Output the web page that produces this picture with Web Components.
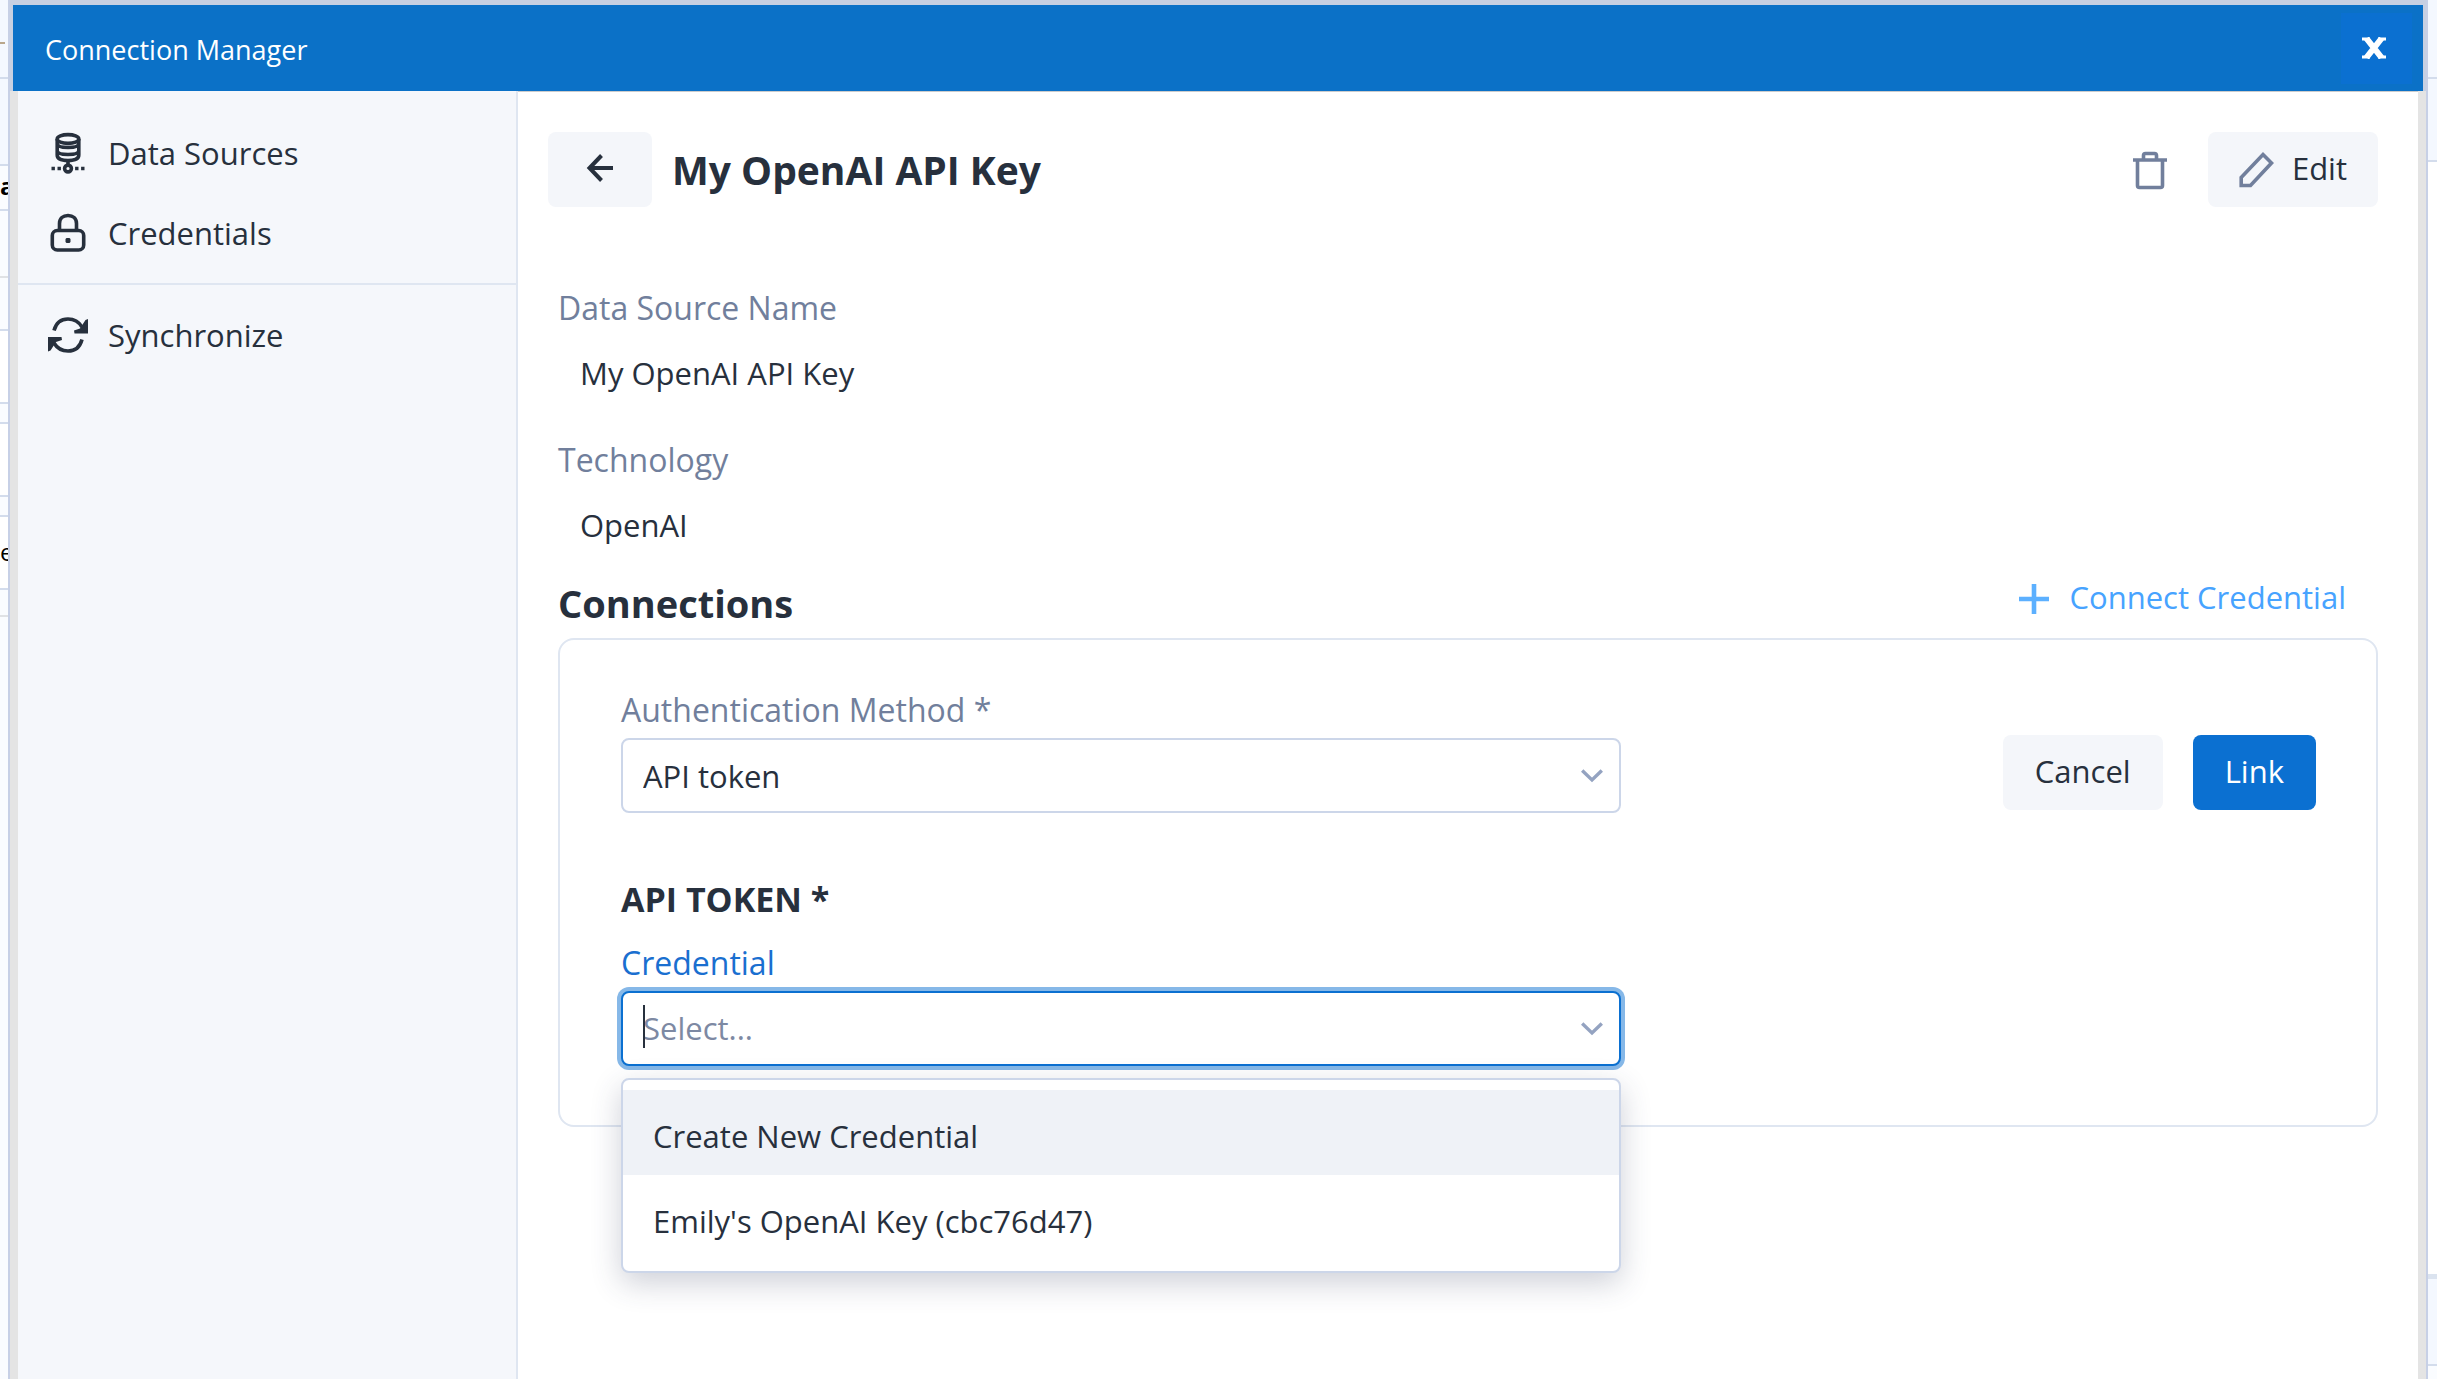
<!DOCTYPE html>
<html lang="en">
<head>
<meta charset="utf-8">
<title>Connection Manager</title>
<style>
  html, body { height: 100%; margin: 0; }
  body {
    --ink: #27303d;
    --muted: #717f9c;
    --line: #dfe6f1;
    --control: #ccd6e9;
    --soft: #f4f6fa;
    --primary: #0b70d1;
    --text: 31px;
    --label: 32px;
    --row: 75px;
    font-family: "Open Sans", "Noto Sans", sans-serif;
    font-size: var(--text);
    line-height: 40px;
    color: var(--ink);
    overflow: hidden;
  }
  cm-desktop { height: 100%; }
</style>
</head>
<body>
<cm-desktop>
  <cm-window heading="Connection Manager">
    <cm-sidebar slot="sidebar">
      <cm-nav-item icon="database">Data Sources</cm-nav-item>
      <cm-nav-item icon="lock">Credentials</cm-nav-item>
      <hr>
      <cm-nav-item icon="sync">Synchronize</cm-nav-item>
    </cm-sidebar>
    <cm-source-page></cm-source-page>
  </cm-window>
</cm-desktop>

<script>
const ICONS = {
  database: `<svg width="44" height="44" viewBox="0 0 44 44" fill="none" stroke="currentColor" stroke-width="3.6">
    <ellipse cx="22" cy="8" rx="10.800" ry="4.400"/><path d="M11.200 8v16c0 3.500 4 5.500 10.800 5.500s10.800-2 10.800-5.500V8M11.200 12.500c0 3 4 4 10.800 4s10.800-1 10.800-4M11.200 19.500c0 3 4 4 10.800 4s10.800-1 10.800-4M22 29.500v4"/>
    <circle cx="22" cy="37.500" r="3.400"/><path stroke-dasharray="3.400 2.600" d="M5.500 37.500H17M38.500 37.500H27"/></svg>`,
  lock: `<svg width="44" height="44" viewBox="0 0 44 44" fill="none" stroke="currentColor" stroke-width="3.6">
    <rect x="6.300" y="19.500" width="31.400" height="19.500" rx="5"/><path d="M13.500 19.500v-7c0-5 3.500-8 8.500-8s8.500 3 8.500 8v7"/>
    <rect x="20" y="27.500" width="4" height="4" rx=".5" fill="currentColor" stroke-width="1"/></svg>`,
  sync: `<svg width="44" height="44" viewBox="0 0 44 44" fill="none" stroke="currentColor" stroke-width="3.6">
    <path d="M8 17.500C10 10 15 6 22 6c6.500 0 11 3 14 8M36 26.500C34 34 29 38 22 38c-6.500 0-11-3-14-8"/>
    <path fill="currentColor" stroke="none" d="M42 6v14.500H28.500L28 17.500l6-2L39.500 7zM2 38.500V24h13.500l.5 3-6 2L4.500 37.500z"/></svg>`,
  back: `<svg width="28" height="30" viewBox="0 0 28 30" fill="none" stroke="currentColor" stroke-width="4">
    <path d="M3 15h24M15.500 2.500L3.500 15l12 12.500"/></svg>`,
  trash: `<svg width="36" height="40" viewBox="0 0 36 40" fill="none" stroke="currentColor" stroke-width="3.6">
    <path d="M1 10h34M5.500 10v25.500q0 2 2 2h21q2 0 2-2V10M11.500 10V5.500q0-2 2-2h9q2 0 2 2V10"/></svg>`,
  pencil: `<svg width="36" height="38" viewBox="0 0 36 38" fill="none" stroke="currentColor" stroke-width="3.6">
    <path d="M25 3.500l8.500 8.500L12.500 34.500H3.200v-8z"/></svg>`,
  plus: `<svg width="32" height="32" viewBox="0 0 32 32" fill="none" stroke="currentColor" stroke-width="4.6"><path d="M16 1v30M1 16h30"/></svg>`,
  chevron: `<svg width="22" height="14" viewBox="0 0 22 14" fill="none" stroke="#94a3c1" stroke-width="3.4"><path d="M1.200 1.500L11 11l9.800-9.500"/></svg>`,
  close: `<svg width="24" height="22" viewBox="0 0 24 22" fill="none" stroke="currentColor"><path stroke-width="6" d="M4.500 1.500l15 19M19.500 1.500l-15 19"/><path stroke-width="3" d="M0 2h8M16 2h8M0 20h8M16 20h8"/></svg>`
};

const define = (name, render) => customElements.define(name, class extends HTMLElement {
  constructor() { super(); this.attachShadow({ mode: "open" }); }
  connectedCallback() {
    this.shadowRoot.innerHTML = `<style>*{box-sizing:border-box} svg{display:block;flex:none} button,input,select{font:inherit;color:inherit;margin:0}</style>` + render(this);
  }
});

/* Page that lies behind the window; only its outer edges are seen. */
define("cm-desktop", () => `
  <style>
    :host { display: grid; grid-template-columns: 8px minmax(0, 1fr) 9px; }
    .edge { overflow: hidden; background: #fafcff; }
    .edge div { border-bottom: 2px solid #d3dcec; overflow: hidden; white-space: nowrap; color: #000; font-size: 24px; }
    .tint { background: #f4f8ff; }
    .white { background: #fff; }
    .edge .grey { border-color: #e0e2e5; }
    .h20 { height: 20px; }
    .h73 { height: 73px; }
    .mark { width: 5px; height: 2px; margin-top: 42px; background: #b9a78c; display: block; }
    .bold { font-weight: 700; }
    .edge .thick { border-bottom: 5px solid #dbe3ef; }
  </style>
  <div class="edge">
    <div class="tint" style="height:79px"><span class="mark"></span></div>
    <div class="tint" style="height:87px"></div>
    <div class="bold" style="height:45px">a</div>
    <div class="grey" style="height:67px"></div>
    <div style="height:53px"></div>
    <div class="white h73"></div>
    <div class="h20"></div>
    <div class="white h73"></div>
    <div class="h20"></div>
    <div class="white h73" style="padding-top:15px">e</div>
    <div class="grey" style="height:27px"></div>
  </div>
  <slot></slot>
  <div class="edge">
    <div class="tint" style="height:79px"></div>
    <div class="tint" style="height:83px"></div>
    <div class="white thick" style="height:1117px"></div>
    <div class="tint" style="height:87px"></div>
  </div>`);

define("cm-window", el => `
  <style>
    :host { display: flex; flex-direction: column; min-width: 0; border: solid #c7d0e6; border-width: 0 2px; background: #e4e4e4; }
    header { display: flex; align-items: center; justify-content: space-between; height: 91px; flex: none;
      border: solid #c7d0e2; border-width: 5px 3px 0; background: #0b71c7; padding: 0 11px 0 32px; color: #fff; font-size: 27px; }
    h1 { margin: 0; padding-top: 3px; font: inherit; }
    button { display: grid; place-items: center; width: 71px; height: 71px; border: 0; background: #0b70d1; padding: 0 6px 0 0; }
    .body { display: flex; flex: 1; min-height: 0; border: solid #e4e4e4; border-width: 0 8px; box-shadow: inset 0 1px #ccc; background: #fff; }
  </style>
  <header><h1>${el.getAttribute("heading")}</h1><button type="button" aria-label="Close">${ICONS.close}</button></header>
  <div class="body"><slot name="sidebar"></slot><slot></slot></div>`);

define("cm-sidebar", () => `
  <style>
    :host { display: block; width: 500px; flex: none; box-sizing: border-box; padding-top: 22px; background: #f5f7fb; border-right: 2px solid var(--line); }
    ::slotted(hr) { margin: 10px 0; border: 0; border-top: 2px solid var(--line); }
  </style>
  <nav><slot></slot></nav>`);

define("cm-nav-item", el => `
  <style>
    :host { display: block; }
    a { display: flex; align-items: center; gap: 18px; height: 80px; padding-left: 28px; color: inherit; text-decoration: none; }
  </style>
  <a href="#">${ICONS[el.getAttribute("icon")]}<span><slot></slot></span></a>`);

define("cm-button", el => `
  <style>
    :host { display: block; flex: none; }
    button { display: flex; align-items: center; justify-content: center; gap: 18px; height: var(--row); min-width: var(--row);
      padding: 0 32px; border: 0; border-radius: 8px; background: var(--soft); color: var(--ink); }
    span { padding-bottom: 3px; }
    svg { color: #717f9c; }
    :host([kind="primary"]) button { background: var(--primary); color: #fff; }
    :host([kind="link"]) button { background: none; color: #47a3ff; gap: 20px; }
    :host([kind="link"]) svg { color: #5cb0ff; }
    :host([kind="plain"]) button { background: none; padding: 0; }
    :host([kind="back"]) button { width: 104px; padding: 0 0 4px; }
    :host([kind="back"]) svg { color: var(--ink); }
    :host([icon="pencil"]) button { padding: 0 31px 0 30px; }
  </style>
  <button type="button" ${el.hasAttribute("label") ? `aria-label="${el.getAttribute("label")}"` : ""}>${ICONS[el.getAttribute("icon")] || ""}${el.textContent.trim() ? "<span><slot></slot></span>" : ""}</button>`);

define("cm-field", el => `
  <style>
    :host { display: block; margin-bottom: 47px; }
    dl, dt, dd { margin: 0; }
    dt { color: var(--muted); font-size: var(--label); }
    dd { margin-top: 25px; padding-left: 22px; }
  </style>
  <dl><dt>${el.getAttribute("label")}</dt><dd><slot></slot></dd></dl>`);

define("cm-select", el => `
  <style>
    :host { display: block; }
    label { display: block; margin-bottom: 8px; color: var(--muted); font-size: var(--label); }
    .box { display: grid; align-items: center; }
    .box > * { grid-area: 1 / 1; }
    select { appearance: none; width: 100%; height: var(--row); padding: 0 60px 0 20px; border: 2px solid var(--control); border-radius: 8px; background: #fff; outline: 0; }
    svg { justify-self: end; margin-right: 18px; pointer-events: none; }
  </style>
  <label for="control">${el.getAttribute("label")}</label>
  <div class="box"><select id="control"><option>${el.getAttribute("value")}</option></select>${ICONS.chevron}</div>`);

define("cm-combobox", el => `
  <style>
    :host { display: block; }
    label { display: block; margin-bottom: 8px; color: #1a6fd0; font-size: var(--label); }
    .box { display: grid; align-items: center; position: relative; }
    .box > svg, .box > input { grid-area: 1 / 1; }
    input { width: 100%; height: var(--row); padding: 0 60px 2px 20px; border: 2px solid var(--primary); border-radius: 8px; background: #fff; outline: 0; box-shadow: 0 0 0 4px #86b8e8; caret-color: transparent; }
    input::placeholder { color: #7d89a3; opacity: 1; }
    svg { justify-self: end; margin-right: 18px; pointer-events: none; }
    .caret { position: absolute; left: 22px; top: 14px; width: 2px; height: 43px; background: var(--ink); }
    ul { position: absolute; left: 0; right: 0; top: calc(100% + 12px); margin: 0; padding: 10px 0 11px; list-style: none; background: #fff;
      border: 2px solid var(--control); border-radius: 8px; box-shadow: 0 10px 30px rgba(50, 60, 90, .24); z-index: 1; }
    ::slotted(li) { height: 85px; box-sizing: border-box; padding: 26px 30px 0; }
    ::slotted(li[aria-selected="true"]) { background: #eff2f7; }
  </style>
  <label for="control">${el.getAttribute("label")}</label>
  <div class="box">
    <input id="control" type="text" role="combobox" aria-expanded="true" aria-controls="menu" placeholder="${el.getAttribute("placeholder")}">
    ${ICONS.chevron}<span class="caret"></span>
    <ul id="menu" role="listbox"><slot></slot></ul>
  </div>`);

define("cm-link-card", () => `
  <style>
    :host { display: flex; justify-content: space-between; align-items: flex-start; margin-top: 2px; padding: 50px 60px 59px 61px; box-sizing: border-box; border: 2px solid var(--line); border-radius: 16px; }
    form { flex: 0 0 59%; }
    h3 { margin: 64px 0 22px; font-size: 34px; line-height: 44px; font-weight: 700; }
    .actions { display: flex; gap: 30px; padding-top: 45px; }
  </style>
  <form>
    <cm-select label="Authentication Method *" value="API token"></cm-select>
    <h3>API TOKEN *</h3>
    <cm-combobox label="Credential" placeholder="Select...">
      <li role="option" aria-selected="true">Create New Credential</li>
      <li role="option">Emily's OpenAI Key (cbc76d47)</li>
    </cm-combobox>
  </form>
  <div class="actions"><cm-button>Cancel</cm-button><cm-button kind="primary">Link</cm-button></div>`);

define("cm-source-page", () => `
  <style>
    :host { display: block; flex: 1; min-width: 0; box-sizing: border-box; padding: 41px 40px 0 30px; }
    h2 { margin: 0; font-size: 39px; line-height: 50px; font-weight: 700; }
    .head { display: flex; align-items: center; gap: 20px; }
    .head h2 { flex: 1; }
    .content { padding: 81px 0 0 10px; }
    .bar { display: flex; align-items: center; justify-content: space-between; margin-top: -31px; }
    .bar h2 { padding-top: 8px; font-size: 38px; }
  </style>
  <div class="head">
    <cm-button kind="back" icon="back" label="Back"></cm-button>
    <h2>My OpenAI API Key</h2>
    <cm-button kind="plain" icon="trash" label="Delete"></cm-button>
    <cm-button icon="pencil">Edit</cm-button>
  </div>
  <div class="content">
    <cm-field label="Data Source Name">My OpenAI API Key</cm-field>
    <cm-field label="Technology">OpenAI</cm-field>
    <div class="bar"><h2>Connections</h2><cm-button kind="link" icon="plus">Connect Credential</cm-button></div>
    <cm-link-card></cm-link-card>
  </div>`);
</script>
</body>
</html>
